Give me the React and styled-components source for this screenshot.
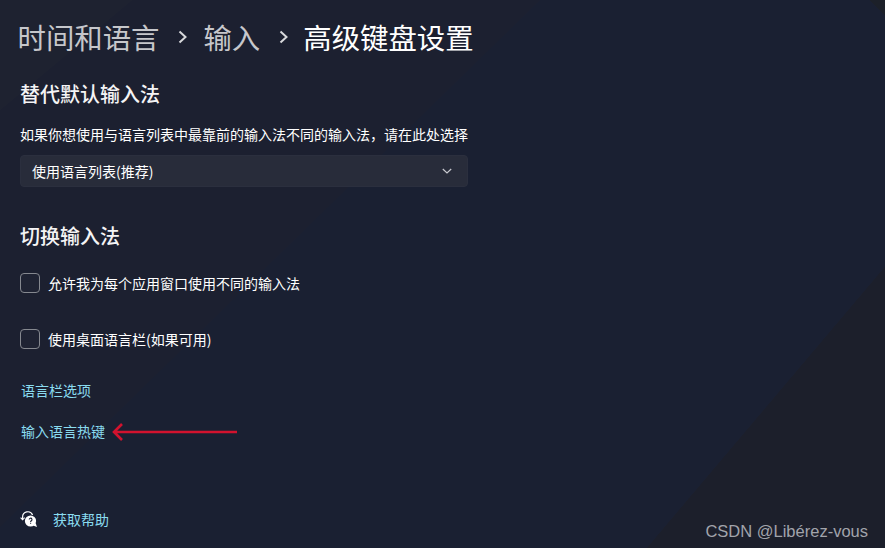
import React from "react";
import styled, { createGlobalStyle } from "styled-components";

const Global = createGlobalStyle`
  html, body { margin: 0; padding: 0; background: #1a2032; }
  body { font-family: "Noto Sans CJK SC", "Liberation Sans", sans-serif; }
`;

const Page = styled.div`
  position: relative;
  box-sizing: border-box;
  width: 885px;
  height: 548px;
  overflow: hidden;
  padding: 15px 20px 0;
  color: #fff;
  background:
    linear-gradient(140.2deg, #1e2230 84.5px, rgba(30,34,48,0) 85px),
    linear-gradient(45deg, rgba(28,32,41,0) 1002px, #1c2029 1002.5px),
    linear-gradient(130.25deg, rgba(28,31,42,0) 847.5px, #1c1f2b 848px),
    linear-gradient(135.7deg, #1c2030 377px, rgba(28,32,48,0) 377.5px),
    #1a2032;
`;

const Breadcrumb = styled.div`
  display: flex;
  align-items: center;
  height: 44px;
  margin-left: -2.5px;
  font-size: 28.4px;
  line-height: 44px;
`;

const Crumb = styled.span`
  color: ${(p) => (p.$current ? "#ffffff" : "#c6c7cb")};
`;

const Sep = styled.svg`
  width: 14px;
  height: 16px;
  margin: 0 ${(p) => p.$right}px 0 16.5px;
  fill: none;
  stroke: #d8d9dc;
  stroke-width: 2;
`;

const SectionTitle = styled.h2`
  margin: ${(p) => p.$top}px 0 0;
  font-size: 20px;
  line-height: 28px;
  font-weight: 500;
  color: #f4f4f5;
`;

const Desc = styled.p`
  margin: 16px 0 0;
  font-size: 14px;
  line-height: 20px;
  color: #fff;
`;

const Select = styled.div`
  display: flex;
  align-items: center;
  justify-content: space-between;
  box-sizing: border-box;
  width: 448px;
  height: 32px;
  margin-top: 11px;
  padding: 0 15px 1px 11px;
  border-radius: 4px;
  background: #282c3a;
  border: 1px solid #2b2f3e;
  font-size: 14px;
  color: #fff;
`;

const Chevron = styled.svg`
  width: 10px;
  height: 6px;
  fill: none;
  stroke: #c9cad0;
  stroke-width: 1.2;
`;

const CheckRow = styled.label`
  display: flex;
  align-items: center;
  gap: 8px;
  height: 20px;
  margin-top: ${(p) => p.$top}px;
  font-size: 14px;
  color: #fff;
`;

const Box = styled.span`
  box-sizing: border-box;
  width: 20px;
  height: 20px;
  border: 1px solid #85888f;
  border-radius: 4px;
  background: #1f2333;
`;

const LinkText = styled.a`
  display: block;
  margin: ${(p) => p.$top}px 0 0 1px;
  font-size: 14px;
  line-height: 20px;
  color: #8adcf0;
`;

const ArrowRow = styled.div`
  display: flex;
  align-items: flex-start;
`;

const Arrow = styled.svg`
  width: 127px;
  height: 20px;
  margin: 21.5px 0 0 6px;
  fill: none;
  stroke: #d2122e;
  stroke-width: 2.6;
`;

const Help = styled.div`
  display: flex;
  align-items: center;
  gap: 13px;
  margin-top: 67.5px;
  font-size: 14px;
  line-height: 20px;
  color: #8adcf0;
`;

const HelpIcon = styled.svg`
  width: 20px;
  height: 20px;
`;

const Watermark = styled.div`
  position: absolute;
  right: 17px;
  bottom: 7px;
  font-family: "Liberation Sans", sans-serif;
  font-size: 16.5px;
  line-height: 20px;
  color: #a2a4ab;
`;

const Chev = ({ right }) => (
  <Sep viewBox="0 0 14 16" $right={right}>
    <path d="M3.5 2.5 9.5 8l-6 5.5" />
  </Sep>
);

export default function App() {
  return (
    <Page>
      <Global />
      <Breadcrumb>
        <Crumb>时间和语言</Crumb>
        <Chev right={13.5} />
        <Crumb>输入</Crumb>
        <Chev right={12.5} />
        <Crumb $current>高级键盘设置</Crumb>
      </Breadcrumb>
      <SectionTitle $top={21}>替代默认输入法</SectionTitle>
      <Desc>如果你想使用与语言列表中最靠前的输入法不同的输入法，请在此处选择</Desc>
      <Select>
        <span>使用语言列表(推荐)</span>
        <Chevron viewBox="0 0 10 6">
          <path d="M.8 1l4.2 4 4.2-4" />
        </Chevron>
      </Select>
      <SectionTitle $top={35}>切换输入法</SectionTitle>
      <CheckRow $top={23}><Box />允许我为每个应用窗口使用不同的输入法</CheckRow>
      <CheckRow $top={36}><Box />使用桌面语言栏(如果可用)</CheckRow>
      <LinkText $top={31}>语言栏选项</LinkText>
      <ArrowRow>
        <LinkText $top={21}>输入语言热键</LinkText>
        <Arrow viewBox="0 0 127 20">
          <path d="M126 10H3M11 2 3 10l8 8" />
        </Arrow>
      </ArrowRow>
      <Help>
        <HelpIcon viewBox="0 0 20 20">
          <path d="M2.6 10.5V8a5.2 5.2 0 0 1 10-2" fill="none" stroke="#fff" strokeWidth="1.2" />
          <path d="M.6 8.6l2 2.2 2-2.2" fill="none" stroke="#fff" strokeWidth="1.1" />
          <circle cx="10.5" cy="12" r="5.6" fill="#fff" />
          <path d="M13 16.4l4 1.6-1.4-4z" fill="#fff" />
          <path d="M9.2 10.6a1.4 1.4 0 1 1 2.1 1.2c-.5.4-.7.6-.7 1.2M10.6 13.8v1" fill="none" stroke="#1b1f31" strokeWidth="1.1" />
        </HelpIcon>
        获取帮助
      </Help>
      <Watermark>CSDN @Libérez-vous</Watermark>
    </Page>
  );
}
